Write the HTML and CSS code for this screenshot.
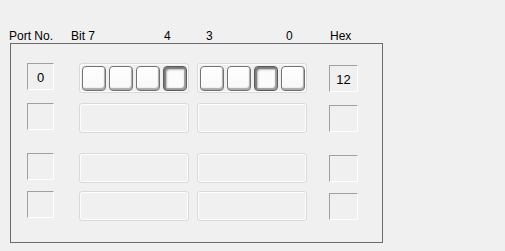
FILE: index.html
```html
<!DOCTYPE html>
<html>
<head>
<meta charset="utf-8">
<link rel="stylesheet" href="styles.css">
</head>
<body>
<div class="labels">
  <span>Port No.</span>
  <span>Bit 7</span>
  <span>4</span>
  <span>3</span>
  <span>0</span>
  <span>Hex</span>
</div>
<div class="panel">
  <div class="row r1">
    <div class="field port">0</div>
    <div class="frame">
      <div class="bit"></div><div class="bit"></div><div class="bit"></div><div class="bit on"></div>
    </div>
    <div class="frame">
      <div class="bit"></div><div class="bit"></div><div class="bit on"></div><div class="bit"></div>
    </div>
    <div class="field hex">12</div>
  </div>
  <div class="row r2">
    <div class="field port"></div>
    <div class="frame off"></div>
    <div class="frame off"></div>
    <div class="field hex"></div>
  </div>
  <div class="row r3">
    <div class="field port"></div>
    <div class="frame off"></div>
    <div class="frame off"></div>
    <div class="field hex"></div>
  </div>
  <div class="row r4">
    <div class="field port"></div>
    <div class="frame off"></div>
    <div class="frame off"></div>
    <div class="field hex"></div>
  </div>
</div>
</body>
</html>
```
FILE: styles.css
```css
html, body {
  margin: 0;
  padding: 0;
  background: #f0f0f0;
  font-family: "Liberation Sans", Arial, sans-serif;
  color: #000;
}
body {
  width: 505px;
  height: 251px;
  overflow: hidden;
}
.labels {
  display: grid;
  grid-template-columns: 62px 93px 42px 80px 44px auto;
  padding: 29px 0 0 9px;
  font-size: 12px;
  line-height: 14px;
  height: 14px;
}
.panel {
  box-sizing: border-box;
  margin-left: 10px;
  width: 373px;
  height: 200px;
  border: 1px solid #6b6b6b;
  padding-left: 16px;
}
.row {
  display: flex;
  align-items: flex-start;
  height: 30px;
}
.r1 { margin-top: 19px; }
.r2 { margin-top: 10px; }
.r3 { margin-top: 20px; }
.r4 { margin-top: 8px; }
.field {
  box-sizing: border-box;
  height: 27px;
  border-top: 1px solid #a0a0a0;
  border-left: 1px solid #a0a0a0;
  border-right: 1px solid #fff;
  border-bottom: 1px solid #fff;
  font-size: 13px;
  line-height: 28px;
  text-align: center;
}
.port {
  width: 27px;
  margin-right: 25px;
}
.hex {
  width: 29px;
  margin-left: 22px;
  margin-top: 2px;
}
.frame {
  box-sizing: border-box;
  width: 110px;
  height: 30px;
  border: 1px solid #d9dadf;
  border-radius: 3px;
  box-shadow: inset 1px 1px 0 #fdfdfd, inset -1px -1px 0 #fdfdfd;
  padding: 2px 0 0 2px;
  display: flex;
  gap: 3px;
}
.frame + .frame {
  margin-left: 8px;
}
.bit {
  box-sizing: border-box;
  width: 24px;
  height: 25px;
  border: 1px solid #737373;
  border-radius: 4px;
  background: linear-gradient(#ffffff, #f7f7f7);
  box-shadow: inset -1px -2px 1px #a9a9a9, inset 1px 1px 0 #fff;
}
.bit.on {
  border-color: #5a5a5a;
  background: #fbfbfb;
  box-shadow: inset 2px 2px 1px #7c7c7c, inset -2px -2px 1px #9a9a9a, inset 3px 3px 2px #c4c4c4;
}
```
